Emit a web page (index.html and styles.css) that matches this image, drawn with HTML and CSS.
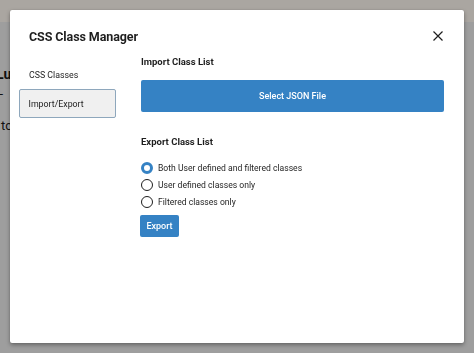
FILE: index.html
```html
<!DOCTYPE html>
<html lang="en">
<head>
  <meta charset="utf-8">
  <title>CSS Class Manager</title>
  <link rel="stylesheet" href="styles.css">
</head>
<body>
  <div class="page">
    <div class="page-top"></div>
    <div class="page-body">
      <div class="page-title">Lu</div>
      <div class="page-rule">–</div>
      <div class="page-text">tc</div>
    </div>
  </div>

  <div class="modal">
    <div class="modal-header">
      <h1>CSS Class Manager</h1>
      <button class="close" aria-label="Close">
        <svg width="12" height="12" viewBox="0 0 12 12">
          <path d="M1.5 1.5 L10.5 10.5 M10.5 1.5 L1.5 10.5" stroke="#1e1e1e" stroke-width="1.2" fill="none"/>
        </svg>
      </button>
    </div>
    <div class="modal-body">
      <ul class="tabs">
        <li class="tab">CSS Classes</li>
        <li class="tab active">Import/Export</li>
      </ul>
      <div class="panel">
        <h2>Import Class List</h2>
        <button class="btn btn-wide">Select JSON File</button>

        <h2 class="export-title">Export Class List</h2>
        <div class="radios">
          <label class="radio"><span class="dot checked"></span>Both User defined and filtered classes</label>
          <label class="radio"><span class="dot"></span>User defined classes only</label>
          <label class="radio"><span class="dot"></span>Filtered classes only</label>
        </div>
        <button class="btn btn-small">Export</button>
      </div>
    </div>
  </div>
</body>
</html>
```

FILE: styles.css
```css
body {
  margin: 0;
  font-family: Roboto, "Noto Sans", Arial, sans-serif;
  color: #1e1e1e;
  background: #9e9e9e;
  overflow: hidden;
}
.page {
  height: 353px;
}
.page-top {
  height: 22px;
  background: #aaa6a1;
}
.page-body {
  padding-top: 44px;
  font-size: 14px;
  color: #111;
  margin-left: -4px;
}
.page-title {
  font-weight: bold;
  height: 22px;
}
.page-rule {
  height: 30px;
  font-size: 12px;
}
.page-text {
  font-size: 13px;
  margin-left: 5px;
}

.modal {
  position: fixed;
  left: 10px;
  top: 10px;
  width: 454px;
  height: 333px;
  background: #fff;
  border-radius: 2px;
  box-shadow: 0 2px 4px rgba(0, 0, 0, 0.35), 0 0 1px rgba(0, 0, 0, 0.3);
  display: flex;
  flex-direction: column;
}
.modal-header {
  height: 42px;
  padding: 10px 19px 0;
  display: flex;
  align-items: center;
  justify-content: space-between;
  box-sizing: border-box;
}
.modal-header h1 {
  margin: 0;
  font-size: 12.5px;
  font-weight: bold;
  letter-spacing: -0.1px;
}
.close {
  border: 0;
  background: none;
  padding: 0;
  width: 12px;
  height: 12px;
  margin-right: 1px;
}
.modal-body {
  display: flex;
}
.tabs {
  list-style: none;
  margin: 0;
  padding: 0;
  margin-left: 9px;
  margin-top: 8px;
  width: 97px;
}
.tab {
  height: 29px;
  box-sizing: border-box;
  padding-left: 10px;
  display: flex;
  align-items: center;
  font-size: 8.8px;
  color: #1e1e1e;
}
.tab.active {
  background: #f0f0f0;
  border: 1.5px solid #8ea7bc;
  border-radius: 2px;
  padding-left: 8.5px;
}
.panel {
  flex: 1;
  margin-left: 25px;
  margin-right: 20px;
}
h2 {
  margin: 2px 0 0;
  height: 16px;
  line-height: 16px;
  font-size: 9.5px;
  font-weight: bold;
}
.btn {
  display: block;
  border: 0;
  border-radius: 2px;
  background: #3582c4;
  color: #fff;
  font-family: inherit;
  font-size: 9px;
  font-weight: 500;
  padding: 0;
}
.btn-wide {
  width: 100%;
  height: 32px;
  margin-top: 10px;
}
.export-title {
  margin-top: 22px;
}
.radios {
  margin-top: 9px;
}
.radio {
  display: flex;
  align-items: center;
  height: 17px;
  font-size: 8.6px;
  color: #1e1e1e;
}
.dot {
  width: 12px;
  height: 12px;
  box-sizing: border-box;
  border: 1px solid #1e1e1e;
  border-radius: 50%;
  margin-right: 5px;
  background: #fff;
}
.dot.checked {
  border: 3.5px solid #3582c4;
  background: #fff;
}
.btn-small {
  width: 39px;
  height: 22px;
  margin-top: 5px;
  margin-left: -1px;
}
```
